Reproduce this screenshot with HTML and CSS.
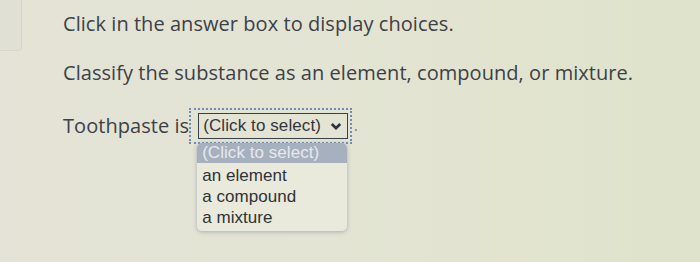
FILE: index.html
```html
<!DOCTYPE html>
<html>
<head>
<meta charset="utf-8">
<link rel="stylesheet" href="styles.css">
</head>
<body>
<div class="screen">
  <div class="edge"></div>
  <div class="content">
    <p class="line first">Click in the answer box to display choices.</p>
    <p class="line">Classify the substance as an element, compound, or mixture.</p>
    <div class="line row">
      <span>Toothpaste is</span>
      <div class="focus">
        <div class="select">
          <span>(Click to select)</span>
          <svg class="chev" width="12" height="9" viewBox="0 0 12 9"><path d="M1.8 2 L6 6.2 L10.2 2" fill="none" stroke="#2e3138" stroke-width="2.6"/></svg>
        </div>
        <div class="menu">
          <div class="opt head">(Click to select)</div>
          <div class="opt">an element</div>
          <div class="opt">a compound</div>
          <div class="opt">a mixture</div>
        </div>
      </div>
      <span class="dot">.</span>
    </div>
  </div>
</div>
</body>
</html>
```

FILE: styles.css
```css
html, body {
  margin: 0;
  padding: 0;
}
body {
  width: 700px;
  height: 262px;
  overflow: hidden;
}
.screen {
  width: 700px;
  height: 262px;
  display: flex;
  background: linear-gradient(90deg, #e4e3d7 0%, #e3e4d3 50%, #dfe3cb 100%);
  position: relative;
}
.edge {
  width: 21px;
  height: 50px;
  border-right: 1px solid #d3d4c8;
  border-bottom: 1px solid #d6d6ca;
  border-bottom-right-radius: 4px;
  background: #e0e0d5;
  flex: none;
}
.content {
  padding-left: 41px;
  padding-top: 11px;
  font-family: "Open Sans", "Lato", sans-serif;
  font-size: 20px;
  color: #3d4147;
  letter-spacing: 0.05px;
}
.line {
  margin: 0 0 23px 0;
  line-height: 26px;
}
.row {
  display: flex;
  align-items: center;
  margin-top: -1px;
}
.focus {
  position: relative;
  margin-left: 0;
  padding: 3px 2px 3px 7px;
  border: 2px dotted #6f8db3;
}
.select {
  display: flex;
  align-items: center;
  gap: 9px;
  border: 1.5px solid #3b3f46;
  padding: 1px 5px 1px 4px;
  font-family: "Liberation Sans", Arial, sans-serif;
  font-size: 17px;
  line-height: 22px;
  color: #33363c;
  letter-spacing: 0.1px;
}
.chev {
  display: block;
}
.dot {
  margin-left: 2px;
  font-size: 14px;
  color: #707070;
}
.menu {
  position: absolute;
  left: 6px;
  top: 33px;
  width: 150px;
  background: #e9eadc;
  border-radius: 5px;
  box-shadow: 0 1px 4px rgba(90, 110, 140, 0.45);
  overflow: hidden;
  font-family: "Liberation Sans", Arial, sans-serif;
  font-size: 17px;
  color: #2f3237;
  padding-bottom: 3px;
}
.opt {
  line-height: 21px;
  padding-left: 5px;
}
.opt.head {
  background: #a7b0be;
  color: #e6e9ef;
  line-height: 20px;
  margin-bottom: 2px;
}
```
